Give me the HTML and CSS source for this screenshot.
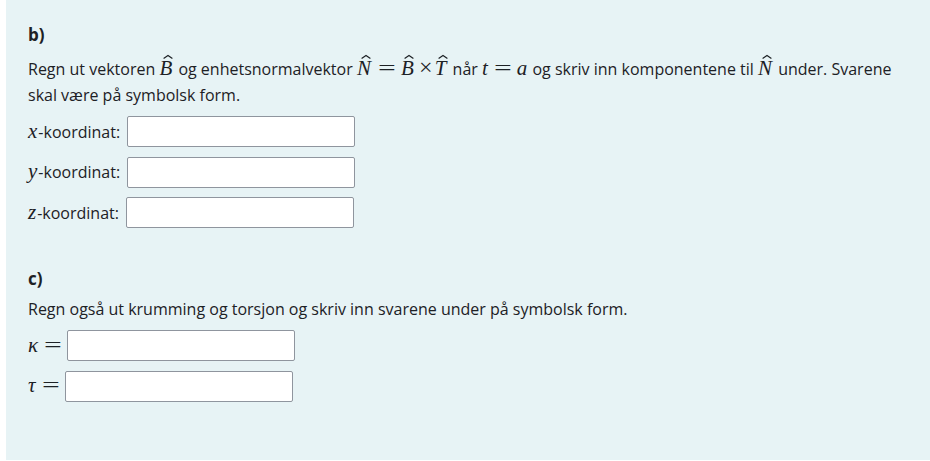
FILE: index.html
```html
<!DOCTYPE html>
<html lang="no">
<head>
<meta charset="utf-8">
<title>Oppgave</title>
<link rel="stylesheet" href="styles.css">
</head>
<body>
<div class="panel">
  <section class="part part-b">
    <h4 class="qnum">b)</h4>
    <p class="qtext">Regn ut vektoren <span class="m"><span class="hat">B<svg class="hat-mark" viewBox="0 0 10 4"><path d="M0.6 3.6 L5 0.6 L9.4 3.6"/></svg></span></span> og enhetsnormalvektor <span class="m"><span class="hat">N<svg class="hat-mark" viewBox="0 0 10 4"><path d="M0.6 3.6 L5 0.6 L9.4 3.6"/></svg></span><span class="op op-eq">=</span><span class="hat">B<svg class="hat-mark" viewBox="0 0 10 4"><path d="M0.6 3.6 L5 0.6 L9.4 3.6"/></svg></span><span class="op op-x">×</span><span class="hat">T<svg class="hat-mark" viewBox="0 0 10 4"><path d="M0.6 3.6 L5 0.6 L9.4 3.6"/></svg></span></span> når <span class="m"><span class="mi">t</span><span class="op op-eq">=</span><span class="mi">a</span></span> og skriv inn komponentene til <span class="m"><span class="hat">N<svg class="hat-mark" viewBox="0 0 10 4"><path d="M0.6 3.6 L5 0.6 L9.4 3.6"/></svg></span></span> under. Svarene skal være på symbolsk form.</p>
    <div class="row"><label class="lbl"><span class="m"><span class="mi">x</span></span>-koordinat:</label><input class="field" type="text"></div>
    <div class="row"><label class="lbl"><span class="m"><span class="mi">y</span></span>-koordinat:</label><input class="field" type="text"></div>
    <div class="row"><label class="lbl"><span class="m"><span class="mi">z</span></span>-koordinat:</label><input class="field" type="text"></div>
  </section>
  <section class="part part-c">
    <h4 class="qnum">c)</h4>
    <p class="qtext">Regn også ut krumming og torsjon og skriv inn svarene under på symbolsk form.</p>
    <div class="row"><label class="lbl lbl-sym"><span class="m"><span class="mi">κ</span><span class="op op-eq op-trail">=</span></span></label><input class="field" type="text"></div>
    <div class="row"><label class="lbl lbl-sym"><span class="m"><span class="mi">τ</span><span class="op op-eq op-trail">=</span></span></label><input class="field" type="text"></div>
  </section>
</div>
</body>
</html>
```
FILE: styles.css
```css
html, body {
  margin: 0;
  padding: 0;
  background: #ffffff;
}
body {
  font-family: "Open Sans", "Noto Sans", sans-serif;
  font-size: 16px;
  color: #1d2125;
}
.panel {
  margin-left: 6px;
  height: 460px;
  box-sizing: border-box;
  background: #e7f3f5;
  padding: 23px 22px 0 22px;
}
.qnum {
  margin: 0 0 9px 0;
  font-size: 17px;
  font-weight: 700;
  line-height: 24px;
}
.qtext {
  margin: 0 0 8px 0;
  line-height: 26px;
  max-width: 880px;
}
.part-c {
  margin-top: 39px;
}
.part-c .qnum {
  margin-bottom: 5px;
}
.row {
  display: flex;
  align-items: center;
  height: 31px;
  margin-bottom: 9.5px;
}
.lbl {
  margin-right: 7px;
  white-space: nowrap;
}
.lbl-sym {
  margin-right: 5px;
}
.field {
  width: 228px;
  height: 31px;
  box-sizing: border-box;
  border: 1px solid #8f959e;
  border-radius: 2px;
  background: #ffffff;
  padding: 4px 8px;
  margin: 0;
  font: inherit;
}
.m {
  font-family: "Liberation Serif", "DejaVu Serif", serif;
  font-size: 21px;
  line-height: 1;
  white-space: nowrap;
}
.mi, .hat {
  font-style: italic;
}
.mi {
  padding-right: 1px;
}
.hat {
  position: relative;
  display: inline-block;
  padding-right: 2px;
}
.hat-mark {
  position: absolute;
  left: 50%;
  top: -3px;
  width: 10px;
  height: 4px;
  margin-left: -4px;
  overflow: visible;
}
.hat-mark path {
  fill: none;
  stroke: #1d2125;
  stroke-width: 1.2;
  stroke-linejoin: miter;
}
.op {
  display: inline-block;
  text-align: center;
  font-style: normal;
}
.op-eq {
  width: 18px;
  margin: 0 5px 0 5px;
  transform: scaleX(1.5);
}
.op-trail {
  margin-right: 0;
}
.op-x {
  width: 14px;
  margin: 0 2px 0 3px;
  font-size: 24px;
  line-height: 21px;
}
```
